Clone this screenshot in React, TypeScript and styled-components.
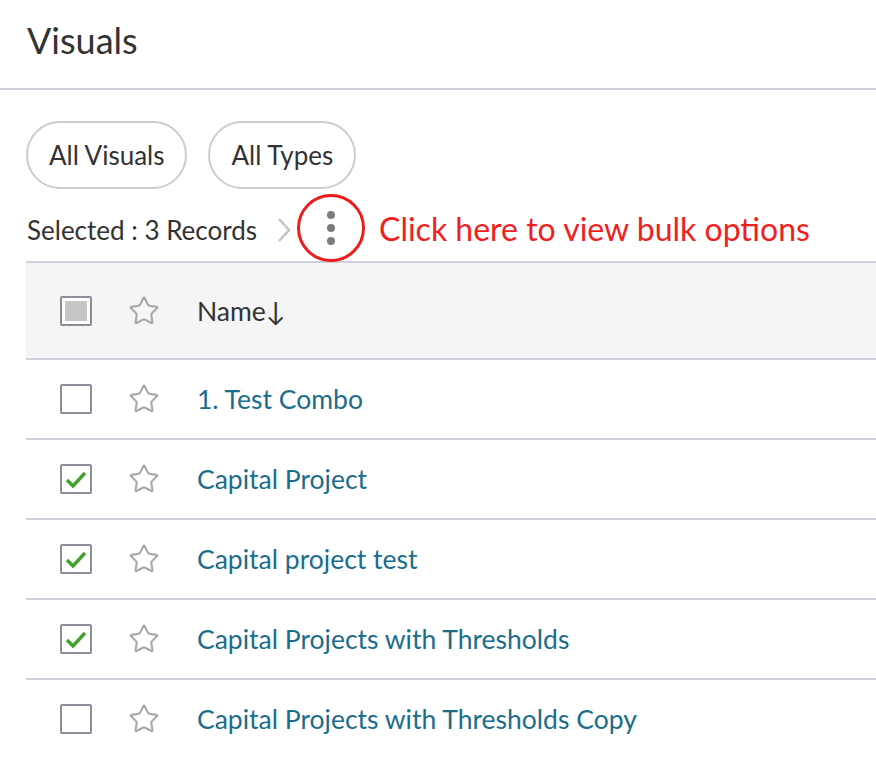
import styled, { createGlobalStyle } from "styled-components";
import { Star } from "lucide-react";

const GlobalStyle = createGlobalStyle`
  body {
    margin: 0;
    background: #fff;
    font-family: Lato, "Noto Sans", sans-serif;
    color: #333;
  }
`;

const Page = styled.div`
  width: 876px;
  height: 758px;
  overflow: hidden;
`;

const Header = styled.header`
  height: 90px;
  padding: 0 27px;
  display: flex;
  align-items: center;
  border-bottom: 2px solid #cdcfdd;
  box-sizing: border-box;

  h1 {
    margin: 0 0 8px;
    font-size: 36px;
    font-weight: 400;
    color: #333;
  }
`;

const Filters = styled.div`
  display: flex;
  gap: 21px;
  padding: 31px 0 0 26px;
`;

const Pill = styled.button`
  height: 68px;
  padding: 0 21px;
  border: 2px solid #cccccc;
  border-radius: 34px;
  background: #fff;
  font-family: inherit;
  font-size: 26px;
  color: #333;
`;

const SelectionBar = styled.div`
  display: flex;
  align-items: center;
  height: 72px;
  padding: 10px 0 0 27px;
  box-sizing: border-box;
  font-size: 26px;
`;

const Chevron = styled.span`
  margin: 0 6px 0 20px;
  display: flex;
`;

const KebabRing = styled.button`
  width: 68px;
  height: 68px;
  border-radius: 50%;
  border: 3px solid #ec1c1c;
  background: transparent;
  display: flex;
  flex-direction: column;
  align-items: center;
  justify-content: center;
  gap: 5px;
  padding: 0;
  margin-top: -4px;
  position: relative;
  z-index: 1;

  span {
    width: 8px;
    height: 8px;
    border-radius: 50%;
    background: #7b7b7b;
  }
`;

const Hint = styled.span`
  margin: -3px 0 0 14px;
  font-size: 32px;
  color: #ef1f1f;
`;

const Table = styled.div`
  margin-left: 26px;
  border-top: 2px solid #cdcfdd;
`;

const Row = styled.div<{ $head?: boolean }>`
  display: flex;
  align-items: center;
  height: ${(p) => (p.$head ? "97px" : "80px")};
  background: ${(p) => (p.$head ? "#f5f5f5" : "#fff")};
  border-bottom: 2px solid #cdcfdd;
  box-sizing: border-box;
  font-size: 26.5px;
`;

const Box = styled.span<{ $mixed?: boolean }>`
  width: 32px;
  height: 30px;
  margin-left: 34px;
  box-sizing: border-box;
  border: 2px solid #8b8f9c;
  border-radius: 2px;
  background: #fff;
  display: flex;
  align-items: center;
  justify-content: center;

  &::after {
    content: "";
    display: ${(p) => (p.$mixed ? "block" : "none")};
    width: 22px;
    height: 20px;
    background: #c6c6c6;
  }
`;

const StarCell = styled.span`
  margin-left: 36px;
  display: flex;
  color: #aaaaaa;
`;

const NameCell = styled.span<{ $link?: boolean }>`
  margin-left: 37px;
  color: ${(p) => (p.$link ? "#1b6d8c" : "#333")};
`;

const rows = [
  { name: "1. Test Combo", checked: false },
  { name: "Capital Project", checked: true },
  { name: "Capital project test", checked: true },
  { name: "Capital Projects with Thresholds", checked: true },
  { name: "Capital Projects with Thresholds Copy", checked: false },
];

const Check = () => (
  <svg width="24" height="20" viewBox="0 0 24 20">
    <path d="M3 11 L9 17 L21 4" fill="none" stroke="#45a030" strokeWidth="3.5" />
  </svg>
);

export default function App() {
  return (
    <Page>
      <GlobalStyle />
      <Header>
        <h1>Visuals</h1>
      </Header>
      <Filters>
        <Pill>All Visuals</Pill>
        <Pill>All Types</Pill>
      </Filters>
      <SelectionBar>
        Selected : 3 Records
        <Chevron>
          <svg width="14" height="26" viewBox="0 0 14 26">
            <path d="M2 2 L12 13 L2 24" fill="none" stroke="#c4c4c4" strokeWidth="2.5" />
          </svg>
        </Chevron>
        <KebabRing>
          <span />
          <span />
          <span />
        </KebabRing>
        <Hint>Click here to view bulk options</Hint>
      </SelectionBar>
      <Table>
        <Row $head>
          <Box $mixed />
          <StarCell>
            <Star size={32} strokeWidth={1.6} />
          </StarCell>
          <NameCell>Name↓</NameCell>
        </Row>
        {rows.map((r) => (
          <Row key={r.name}>
            <Box>{r.checked && <Check />}</Box>
            <StarCell>
              <Star size={32} strokeWidth={1.6} />
            </StarCell>
            <NameCell $link>{r.name}</NameCell>
          </Row>
        ))}
      </Table>
    </Page>
  );
}
